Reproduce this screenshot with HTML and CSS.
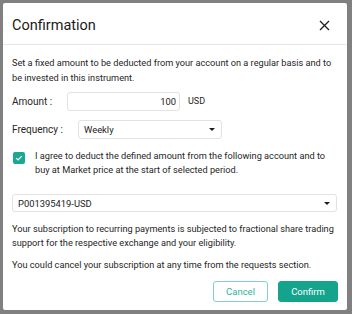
FILE: index.html
```html
<!DOCTYPE html>
<html>
<head>
<meta charset="utf-8">
<link rel="stylesheet" href="styles.css">
</head>
<body>
<div class="dialog">
  <div class="header">
    <div class="title">Confirmation</div>
    <svg class="close" width="11" height="11" viewBox="0 0 11 11"><path d="M1 1L10 10M10 1L1 10" stroke="#222" stroke-width="1.4" fill="none"/></svg>
  </div>
  <div class="body">
    <p class="intro">Set a fixed amount to be deducted from your account on a regular basis and to be invested in this instrument.</p>
    <div class="row amount-row">
      <span class="label">Amount :</span>
      <div class="input amount">100</div>
      <span class="unit">USD</span>
    </div>
    <div class="row freq-row">
      <span class="label">Frequency :</span>
      <div class="input select freq"><span>Weekly</span><span class="caret"></span></div>
    </div>
    <div class="agree">
      <span class="check"><svg width="12" height="12" viewBox="0 0 12 12"><path d="M3.2 6.1L5.1 8L8.8 4.2" stroke="#fff" stroke-width="1.2" fill="none"/></svg></span>
      <span class="agree-text">I agree to deduct the defined amount from the following account and to buy at Market price at the start of selected period.</span>
    </div>
    <div class="input select account"><span>P001395419-USD</span><span class="caret"></span></div>
    <p class="note">Your subscription to recurring payments is subjected to fractional share trading support for the respective exchange and your eligibility.</p>
    <p class="note2">You could cancel your subscription at any time from the requests section.</p>
    <div class="actions">
      <button class="btn cancel">Cancel</button>
      <button class="btn confirm">Confirm</button>
    </div>
  </div>
</div>
</body>
</html>
```
FILE: styles.css
```css
html, body {
  margin: 0;
  padding: 0;
}
body {
  background: #808080;
  font-family: Roboto, "Noto Sans", sans-serif;
  color: #262626;
  width: 352px;
  height: 314px;
  overflow: hidden;
}
.dialog {
  margin: 3px 0 0 3px;
  width: 344px;
  height: 307px;
  background: #fff;
  border-radius: 2px;
}
.header {
  height: 41px;
  border-bottom: 1px solid #e6e6e6;
  display: flex;
  align-items: center;
  justify-content: space-between;
  padding: 0 17px 0 9px;
}
.title {
  font-size: 14.5px;
  color: #1a1a1a;
  padding-top: 4px;
}
.close {
  margin-top: 3px;
}
.body {
  padding: 9.5px 9px 0 9px;
  font-size: 9.2px;
  line-height: 15px;
}
p {
  margin: 0;
}
.intro {
  margin-bottom: 7.5px;
}
.row {
  display: flex;
  align-items: center;
  height: 19px;
}
.label {
  font-size: 10px;
  color: #262626;
}
.amount-row .label {
  width: 55px;
}
.freq-row .label {
  width: 66px;
}
.input {
  border: 1px solid #e2e2e2;
  border-radius: 3px;
  box-sizing: border-box;
  font-size: 9.4px;
  color: #222;
  display: flex;
  align-items: center;
}
.amount {
  width: 113px;
  height: 19px;
  justify-content: flex-end;
  padding-right: 3px;
}
.unit {
  margin-left: 8px;
  font-size: 9px;
}
.freq-row {
  margin-top: 9px;
}
.freq {
  width: 144px;
  height: 19px;
  padding: 0 6px 0 5px;
  justify-content: space-between;
}
.caret {
  width: 0;
  height: 0;
  border-left: 3.5px solid transparent;
  border-right: 3.5px solid transparent;
  border-top: 3.5px solid #1e1e1e;
}
.agree {
  display: flex;
  margin-top: 10px;
  line-height: 14px;
}
.check {
  flex: none;
  width: 12px;
  height: 12px;
  margin: 3px 10px 0 1px;
  background: #1aa892;
  border-radius: 2px;
  display: flex;
}
.account {
  margin-top: 17px;
  width: 325px;
  height: 18px;
  padding: 0 6px 0 5px;
  justify-content: space-between;
}
.note {
  margin-top: 10px;
  line-height: 14px;
}
.note2 {
  margin-top: 8px;
  line-height: 14px;
}
.actions {
  display: flex;
  justify-content: flex-end;
  gap: 10px;
  margin-top: 9px;
}
.btn {
  font-family: Roboto, "Noto Sans", sans-serif;
  font-size: 9.5px;
  height: 21px;
  border-radius: 3px;
  padding: 0;
  cursor: pointer;
}
.cancel {
  width: 55px;
  background: #fff;
  border: 1px solid #7fd2c5;
  color: #2fb39e;
}
.confirm {
  width: 60px;
  background: #14a48c;
  border: 1px solid #14a48c;
  color: #fff;
}
```
